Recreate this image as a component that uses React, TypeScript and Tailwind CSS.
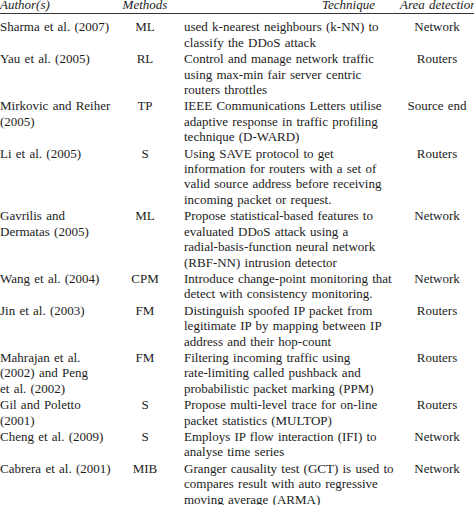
type Row = {
  author: string[];
  method: string;
  technique: string[];
  area: string;
};

const rows: Row[] = [
  {
    author: ['Sharma et al. (2007)'],
    method: 'ML',
    technique: ['used k-nearest neighbours (k-NN) to', 'classify the DDoS attack'],
    area: 'Network',
  },
  {
    author: ['Yau et al. (2005)'],
    method: 'RL',
    technique: ['Control and manage network traffic', 'using max-min fair server centric', 'routers throttles'],
    area: 'Routers',
  },
  {
    author: ['Mirkovic and Reiher', '(2005)'],
    method: 'TP',
    technique: [
      'IEEE Communications Letters utilise',
      'adaptive response in traffic profiling',
      'technique (D-WARD)',
    ],
    area: 'Source end',
  },
  {
    author: ['Li et al. (2005)'],
    method: 'S',
    technique: [
      'Using SAVE protocol to get',
      'information for routers with a set of',
      'valid source address before receiving',
      'incoming packet or request.',
    ],
    area: 'Routers',
  },
  {
    author: ['Gavrilis and', 'Dermatas (2005)'],
    method: 'ML',
    technique: [
      'Propose statistical-based features to',
      'evaluated DDoS attack using a',
      'radial-basis-function neural network',
      '(RBF-NN) intrusion detector',
    ],
    area: 'Network',
  },
  {
    author: ['Wang et al. (2004)'],
    method: 'CPM',
    technique: ['Introduce change-point monitoring that', 'detect with consistency monitoring.'],
    area: 'Network',
  },
  {
    author: ['Jin et al. (2003)'],
    method: 'FM',
    technique: [
      'Distinguish spoofed IP packet from',
      'legitimate IP by mapping between IP',
      'address and their hop-count',
    ],
    area: 'Routers',
  },
  {
    author: ['Mahrajan et al.', '(2002) and Peng', 'et al. (2002)'],
    method: 'FM',
    technique: [
      'Filtering incoming traffic using',
      'rate-limiting called pushback and',
      'probabilistic packet marking (PPM)',
    ],
    area: 'Routers',
  },
  {
    author: ['Gil and Poletto', '(2001)'],
    method: 'S',
    technique: ['Propose multi-level trace for on-line', 'packet statistics (MULTOP)'],
    area: 'Routers',
  },
  {
    author: ['Cheng et al. (2009)'],
    method: 'S',
    technique: ['Employs IP flow interaction (IFI) to', 'analyse time series'],
    area: 'Network',
  },
  {
    author: ['Cabrera et al. (2001)'],
    method: 'MIB',
    technique: [
      'Granger causality test (GCT) is used to',
      'compares result with auto regressive',
      'moving average (ARMA)',
    ],
    area: 'Network',
  },
];

const cols = 'grid grid-cols-[112px_66px_222px_74px]';

export default function App() {
  return (
    <div className="h-[505px] w-[474px] overflow-hidden bg-white font-['Liberation_Serif','Times_New_Roman',serif] text-[13px] leading-[15.4px] text-[#1c1c1c] [word-spacing:1px]">
      {/* header */}
      <div className={`${cols} -mt-[3px] border-b border-[#333] pb-[1px] italic`}>
        <div>Author(s)</div>
        <div className="text-center">Methods</div>
        <div className="pl-[144px] whitespace-nowrap">Technique</div>
        <div className="text-center whitespace-nowrap">Area detection</div>
      </div>

      <div className="flex flex-col gap-[1px] pt-[5px]">
        {rows.map((row) => (
          <div key={row.author.join(' ')} className={cols}>
            <div className="whitespace-nowrap">
              {row.author.map((line) => (
                <div key={line}>{line}</div>
              ))}
            </div>
            <div className="text-center">{row.method}</div>
            <div className="pl-[6px] whitespace-nowrap">
              {row.technique.map((line) => (
                <div key={line}>{line}</div>
              ))}
            </div>
            <div className="text-center whitespace-nowrap">{row.area}</div>
          </div>
        ))}
      </div>
    </div>
  );
}
